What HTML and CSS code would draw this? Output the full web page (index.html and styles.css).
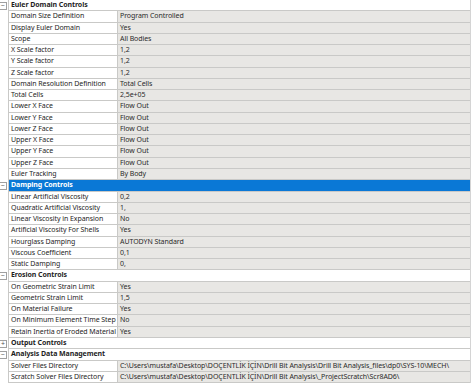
FILE: index.html
```html
<!DOCTYPE html>
<html lang="en">
<head>
  <meta charset="UTF-8">
  <meta name="viewport" content="width=device-width, initial-scale=1.0">
  <title>Details</title>
  <link rel="stylesheet" href="styles.css">
</head>
<body>

  <div id="details" class="details"></div>

  <script>
    const rows = [
      { group: "Euler Domain Controls", open: true },
      ["Domain Size Definition", "Program Controlled"],
      ["Display Euler Domain", "Yes"],
      ["Scope", "All Bodies"],
      ["X Scale factor", "1,2"],
      ["Y Scale factor", "1,2"],
      ["Z Scale factor", "1,2"],
      ["Domain Resolution Definition", "Total Cells"],
      ["Total Cells", "2,5e+05"],
      ["Lower X Face", "Flow Out"],
      ["Lower Y Face", "Flow Out"],
      ["Lower Z Face", "Flow Out"],
      ["Upper X Face", "Flow Out"],
      ["Upper Y Face", "Flow Out"],
      ["Upper Z Face", "Flow Out"],
      ["Euler Tracking", "By Body"],
      { group: "Damping Controls", open: true, selected: true },
      ["Linear Artificial Viscosity", "0,2"],
      ["Quadratic Artificial Viscosity", "1,"],
      ["Linear Viscosity in Expansion", "No"],
      ["Artificial Viscosity For Shells", "Yes"],
      ["Hourglass Damping", "AUTODYN Standard"],
      ["Viscous Coefficient", "0,1"],
      ["Static Damping", "0,"],
      { group: "Erosion Controls", open: true },
      ["On Geometric Strain Limit", "Yes"],
      ["Geometric Strain Limit", "1,5"],
      ["On Material Failure", "Yes"],
      ["On Minimum Element Time Step", "No"],
      ["Retain Inertia of Eroded Material", "Yes"],
      { group: "Output Controls", open: false },
      { group: "Analysis Data Management", open: true },
      ["Solver Files Directory", "C:\\Users\\mustafa\\Desktop\\DOÇENTLİK İÇİN\\Drill Bit Analysis\\Drill Bit Analysis_files\\dp0\\SYS-10\\MECH\\"],
      ["Scratch Solver Files Directory", "C:\\Users\\mustafa\\Desktop\\DOÇENTLİK İÇİN\\Drill Bit Analysis\\_ProjectScratch\\Scr8AD6\\"]
    ];

    const details = document.getElementById("details");

    rows.forEach(row => {
      const div = document.createElement("div");
      if (Array.isArray(row)) {
        div.className = "row";
        div.innerHTML = `<span class="gutter"></span><span class="name"></span><span class="value"></span>`;
        div.querySelector(".name").textContent = row[0];
        div.querySelector(".value").textContent = row[1];
      } else {
        div.className = row.selected ? "row group selected" : "row group";
        div.innerHTML = `<span class="gutter"><span class="toggle">${row.open ? "−" : "+"}</span></span><span class="title"></span>`;
        div.querySelector(".title").textContent = row.group;
      }
      details.appendChild(div);
    });
  </script>

</body>
</html>
```

FILE: styles.css
```css
body {
  font-family: 'Segoe UI', 'Noto Sans', sans-serif;
  font-size: 7px;
  letter-spacing: -0.07px;
  color: #1e1e1e;
  background-color: #fff;
  margin: 0;
}
.details {
  width: 470px;
  border-right: 1px solid #d4d4d4;
}
.row {
  display: flex;
  height: 11.27px;
  line-height: 10.5px;
}
.gutter {
  width: 8px;
  flex: none;
  position: relative;
}
.name, .value, .title {
  box-sizing: border-box;
  border-left: 1px solid #c9c9c7;
  border-bottom: 1px solid #c9c9c7;
  padding-left: 2px;
  white-space: nowrap;
  overflow: hidden;
}
.name {
  width: 109px;
  flex: none;
  background-color: #fff;
}
.value {
  flex: 1;
  background-color: #e8e7e4;
  color: #2a2a2a;
}
.title {
  flex: 1;
  font-weight: bold;
  background-color: #fff;
}
.selected .title {
  background-color: #0a78d6;
  color: #fff;
}
.toggle {
  position: absolute;
  left: -1px;
  top: 2px;
  width: 6px;
  height: 6px;
  border: 1px solid #a0a0a0;
  line-height: 6px;
  text-align: center;
  font-size: 7px;
  letter-spacing: 0;
  color: #555;
}
```
